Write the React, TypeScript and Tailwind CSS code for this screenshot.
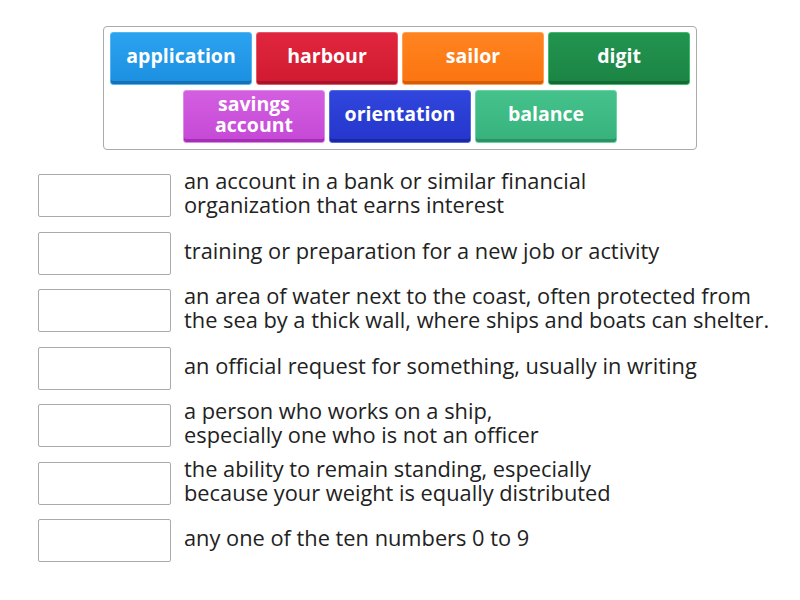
import React from "react";

const tiles1 = [
  { t: "application", c: "bg-[linear-gradient(#2ba3f0,#1c8fe0)] border-[#53b6f3]", b: "shadow-[inset_0_-3px_0_#1570b5]" },
  { t: "harbour", c: "bg-[linear-gradient(#e0263e,#d01a30)] border-[#e85767]", b: "shadow-[inset_0_-3px_0_#a8142a]" },
  { t: "sailor", c: "bg-[linear-gradient(#ff8420,#fb7410)] border-[#ffa050]", b: "shadow-[inset_0_-3px_0_#d65c06]" },
  { t: "digit", c: "bg-[linear-gradient(#229450,#1c8444)] border-[#3cbd6c]", b: "shadow-[inset_0_-3px_0_#146a34]" },
];
const tiles2 = [
  { t: "savings account", c: "bg-[linear-gradient(#d35fe0,#c548d6)] border-[#df8ae8]", b: "shadow-[inset_0_-3px_0_#a22fb4]" },
  { t: "orientation", c: "bg-[linear-gradient(#3046dc,#2536cc)] border-[#5467e6]", b: "shadow-[inset_0_-3px_0_#1a28a4]" },
  { t: "balance", c: "bg-[linear-gradient(#45c28c,#37b27c)] border-[#6ad3a4]", b: "shadow-[inset_0_-3px_0_#2a9264]" },
];

const defs = [
  ["an account in a bank or similar financial", "organization that earns interest"],
  ["training or preparation for a new job or activity"],
  ["an area of water next to the coast, often protected from", "the sea by a thick wall, where ships and boats can shelter."],
  ["an official request for something, usually in writing"],
  ["a person who works on a ship,", "especially one who is not an officer"],
  ["the ability to remain standing, especially", "because your weight is equally distributed"],
  ["any one of the ten numbers 0 to 9"],
];

function Tile({ t, c, b }: { t: string; c: string; b: string }) {
  return (
    <div
      className={`w-[142px] h-[53px] rounded-[3px] border ${c} ${b} flex items-center justify-center text-white font-bold text-[19.5px] leading-[21px] text-center px-1 pb-[6px]`}
    >
      {t === "savings account" ? (
        <span>
          savings
          <br />
          account
        </span>
      ) : (
        t
      )}
    </div>
  );
}

export default function App() {
  return (
    <div
      className="w-[800px] h-[600px] bg-white"
      style={{ fontFamily: '"Open Sans", sans-serif' }}
    >
      <div className="pt-[26px] pl-[103px]">
        <div className="w-[594px] border border-[#aaaaaa] rounded-[4px] px-[6px] pt-[5px] pb-[6px] flex flex-col items-center gap-[5px]">
          <div className="flex gap-[4px]">
            {tiles1.map((x) => (
              <Tile key={x.t} {...x} />
            ))}
          </div>
          <div className="flex gap-[4px]">
            {tiles2.map((x) => (
              <Tile key={x.t} {...x} />
            ))}
          </div>
        </div>
      </div>
      <div className="pl-[38px] pt-[24px] flex flex-col gap-[14.5px]">
        {defs.map((d, i) => (
          <div key={i} className="flex items-center h-[43px]">
            <div className="w-[133px] h-[43px] border border-[#aaaaaa] rounded-[2px] bg-white shrink-0" />
            <div className="ml-[13px] pb-[5px] text-[21.8px] leading-[24px] text-[#222222] whitespace-nowrap">
              {d.map((l, j) => (
                <div key={j}>{l}</div>
              ))}
            </div>
          </div>
        ))}
      </div>
    </div>
  );
}
